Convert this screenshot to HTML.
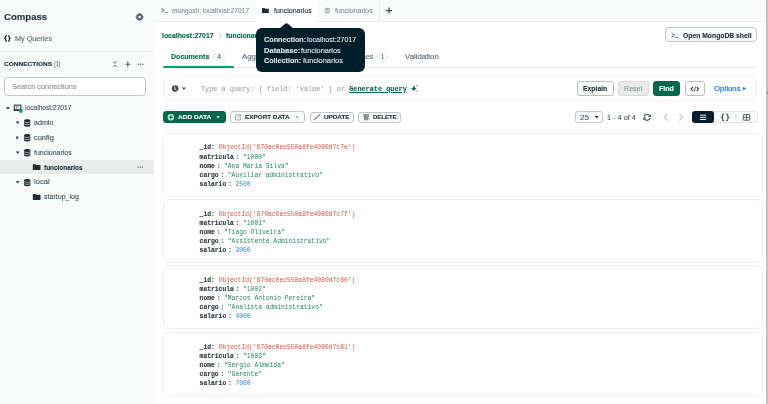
<!DOCTYPE html>
<html><head><meta charset="utf-8">
<style>
*{margin:0;padding:0;box-sizing:border-box}
html,body{width:768px;height:404px;overflow:hidden;background:#fff;font-family:"Liberation Sans",sans-serif;color:#1c2d38}
.a{position:absolute;white-space:nowrap;line-height:1}
svg{position:absolute;overflow:visible}
.tx{position:absolute;white-space:nowrap;line-height:1;transform-origin:0 0;-webkit-text-stroke:0.12px currentColor}
.card{position:absolute;left:162.6px;width:600.3px;height:64px;border:1px solid #edf0ef;border-radius:6px;background:#fff}
.doc{position:absolute;left:36.2px;top:9px;font-family:"Liberation Mono",monospace;font-size:6.18px;line-height:9px;color:#5c6c75;white-space:pre}
.doc b{color:#3d4f58}
.oid{color:#e0533c}
.str{color:#1f8a5a}
.num{color:#2f7ef6}
.btn{position:absolute;border:1px solid #c1c7c6;border-radius:3px;background:#f9fbfa}
.dl b{-webkit-text-stroke:0.15px currentColor}.dl{position:absolute;left:199.6px;font-family:"Liberation Mono",monospace;font-size:6.333px;line-height:9.05px;white-space:pre}
</style></head><body><div id="wrap" style="position:absolute;left:0;top:0;width:768px;height:404px;will-change:transform">
<!-- sidebar -->
<div class="a" style="left:0;top:0;width:154.2px;height:404px;background:#f9fbfa"></div>
<div class="a" style="left:0;top:51px;width:154.2px;height:1px;background:#eceff0"></div>
<div class="a" style="left:4px;top:77.2px;width:141.8px;height:18.6px;border:1px solid #c1c7c6;border-radius:3.5px;background:#fff"></div>
<div class="a" style="left:0;top:160.2px;width:154.2px;height:14.2px;background:#e8edeb"></div>
<!-- tab bar -->
<div class="a" style="left:154.2px;top:0;width:614px;height:21.5px;background:#f9fbfa;border-bottom:1px solid #eef0f0"></div>
<div class="a" style="left:255.5px;top:0;width:61.5px;height:21.6px;background:#fff"></div>

<div class="a" style="left:379.2px;top:0;width:0.8px;height:20.6px;background:#eceff0"></div>
<!-- main lines -->
<div class="a" style="left:163px;top:66.8px;width:594.3px;height:1px;background:#e8edeb"></div>
<div class="a" style="left:163px;top:65.8px;width:70.5px;height:2.2px;border-radius:1.1px;background:#00a35c"></div>
<!-- badges -->
<div class="a" style="left:213.4px;top:52.1px;width:11.4px;height:9.4px;border:1px solid #e8edeb;border-radius:5px;background:#f9fbfa"></div>
<div class="a" style="left:377.2px;top:51.9px;width:10.5px;height:9.9px;border:1px solid #e8edeb;border-radius:5px;background:#f9fbfa"></div>
<!-- open shell -->
<div class="btn" style="left:664.5px;top:27.4px;width:92.5px;height:15px;border-radius:4px"></div>
<!-- query bar -->
<div class="a" style="left:162.6px;top:75.8px;width:594.8px;height:25.1px;border:1px solid #ebefee;border-radius:5px;background:#fff"></div>
<div class="btn" style="left:577.1px;top:81.2px;width:36.6px;height:14.6px;background:#fff;border-color:#b8c0bf"></div>
<div class="btn" style="left:617.8px;top:81.2px;width:31.3px;height:14.6px;background:#e8edeb;border-color:#d6dbda"></div>
<div class="btn" style="left:653.3px;top:81.3px;width:26.7px;height:14.6px;background:#00684a;border-color:#00684a"></div>
<div class="btn" style="left:684.5px;top:81.3px;width:20.5px;height:14.6px;background:#fff;border-color:#b8c0bf"></div>
<!-- toolbar -->
<div class="btn" style="left:162.9px;top:111.3px;width:63.1px;height:11.7px;background:#00684a;border-color:#00684a"></div>
<div class="btn" style="left:230.3px;top:111.3px;width:74.8px;height:11.7px"></div>
<div class="btn" style="left:309.6px;top:111.5px;width:44.2px;height:11.5px"></div>
<div class="btn" style="left:358.4px;top:111.5px;width:42.7px;height:11.5px"></div>
<div class="btn" style="left:575.4px;top:111.1px;width:27.9px;height:12.2px;background:#fff"></div>
<div class="a" style="left:692.3px;top:111.3px;width:65.3px;height:12px;border:1px solid #e3e8e6;border-radius:3.5px;background:#f9fbfa"></div>
<div class="a" style="left:692.3px;top:111.3px;width:21.7px;height:11.6px;border-radius:3px;background:#001e2b"></div>
<!-- cards -->
<div class="card" style="top:132.8px"></div>
<div class="card" style="top:198.9px"></div>
<div class="card" style="top:265.1px"></div>
<div class="card" style="top:332.1px"></div>
<div class="dl" style="top:143.47px"><b style="color:#2f3f48">_id</b><b style="color:#5c6c75">:</b> <span style="color:#e0533c">ObjectId('670ac0ec550a8fe4080d7c7e')</span></div>
<div class="dl" style="top:152.52px"><b style="color:#2f3f48">matricula</b><b style="color:#5c6c75;display:inline-block;margin:0 3.5px 0 1.9px">:</b><span style="color:#1f8a5a">"1000"</span></div>
<div class="dl" style="top:161.57px"><b style="color:#2f3f48">nome</b><b style="color:#5c6c75;display:inline-block;margin:0 3.5px 0 1.9px">:</b><span style="color:#1f8a5a">"Ana Maria Silva"</span></div>
<div class="dl" style="top:170.62px"><b style="color:#2f3f48">cargo</b><b style="color:#5c6c75;display:inline-block;margin:0 3.5px 0 1.9px">:</b><span style="color:#1f8a5a">"Auxiliar administrativo"</span></div>
<div class="dl" style="top:179.67px"><b style="color:#2f3f48">salario</b><b style="color:#5c6c75;display:inline-block;margin:0 3.5px 0 1.9px">:</b><span style="color:#2f7ef6">2500</span></div>
<div class="dl" style="top:209.57px"><b style="color:#2f3f48">_id</b><b style="color:#5c6c75">:</b> <span style="color:#e0533c">ObjectId('670ac0ec550a8fe4080d7c7f')</span></div>
<div class="dl" style="top:218.62px"><b style="color:#2f3f48">matricula</b><b style="color:#5c6c75;display:inline-block;margin:0 3.5px 0 1.9px">:</b><span style="color:#1f8a5a">"1001"</span></div>
<div class="dl" style="top:227.67px"><b style="color:#2f3f48">nome</b><b style="color:#5c6c75;display:inline-block;margin:0 3.5px 0 1.9px">:</b><span style="color:#1f8a5a">"Tiago Oliveira"</span></div>
<div class="dl" style="top:236.72px"><b style="color:#2f3f48">cargo</b><b style="color:#5c6c75;display:inline-block;margin:0 3.5px 0 1.9px">:</b><span style="color:#1f8a5a">"Assistente Administrativo"</span></div>
<div class="dl" style="top:245.77px"><b style="color:#2f3f48">salario</b><b style="color:#5c6c75;display:inline-block;margin:0 3.5px 0 1.9px">:</b><span style="color:#2f7ef6">3000</span></div>
<div class="dl" style="top:275.77px"><b style="color:#2f3f48">_id</b><b style="color:#5c6c75">:</b> <span style="color:#e0533c">ObjectId('670ac0ec550a8fe4080d7c80')</span></div>
<div class="dl" style="top:284.82px"><b style="color:#2f3f48">matricula</b><b style="color:#5c6c75;display:inline-block;margin:0 3.5px 0 1.9px">:</b><span style="color:#1f8a5a">"1002"</span></div>
<div class="dl" style="top:293.87px"><b style="color:#2f3f48">nome</b><b style="color:#5c6c75;display:inline-block;margin:0 3.5px 0 1.9px">:</b><span style="color:#1f8a5a">"Marcos Antonio Pereira"</span></div>
<div class="dl" style="top:302.92px"><b style="color:#2f3f48">cargo</b><b style="color:#5c6c75;display:inline-block;margin:0 3.5px 0 1.9px">:</b><span style="color:#1f8a5a">"Analista administrativo"</span></div>
<div class="dl" style="top:311.97px"><b style="color:#2f3f48">salario</b><b style="color:#5c6c75;display:inline-block;margin:0 3.5px 0 1.9px">:</b><span style="color:#2f7ef6">4000</span></div>
<div class="dl" style="top:342.77px"><b style="color:#2f3f48">_id</b><b style="color:#5c6c75">:</b> <span style="color:#e0533c">ObjectId('670ac0ec550a8fe4080d7c81')</span></div>
<div class="dl" style="top:351.82px"><b style="color:#2f3f48">matricula</b><b style="color:#5c6c75;display:inline-block;margin:0 3.5px 0 1.9px">:</b><span style="color:#1f8a5a">"1003"</span></div>
<div class="dl" style="top:360.87px"><b style="color:#2f3f48">nome</b><b style="color:#5c6c75;display:inline-block;margin:0 3.5px 0 1.9px">:</b><span style="color:#1f8a5a">"Sergio Almeida"</span></div>
<div class="dl" style="top:369.92px"><b style="color:#2f3f48">cargo</b><b style="color:#5c6c75;display:inline-block;margin:0 3.5px 0 1.9px">:</b><span style="color:#1f8a5a">"Gerente"</span></div>
<div class="dl" style="top:378.97px"><b style="color:#2f3f48">salario</b><b style="color:#5c6c75;display:inline-block;margin:0 3.5px 0 1.9px">:</b><span style="color:#2f7ef6">7000</span></div>
<!-- query placeholder -->
<div class="a" style="left:201.2px;top:85.6px;font-family:'Liberation Mono',monospace;font-size:7.5px;transform:scaleX(0.9144);transform-origin:0 0;-webkit-text-stroke:0.1px currentColor;color:#9aa3a6;white-space:pre">Type a query: { field: 'value' } or <b style="color:#00684a;text-decoration:underline">Generate query</b></div>
<!-- ICONS -->
<svg style="left:0;top:0" width="768" height="404" viewBox="0 0 768 404">
<!-- gear -->
<circle cx="139.6" cy="16.9" r="2.35" fill="none" stroke="#5c6c75" stroke-width="2.3"/>
<g fill="#5c6c75">
<rect x="139" y="12.9" width="1.2" height="1" /><rect x="139" y="19.9" width="1.2" height="1"/>
<rect x="135.6" y="16.3" width="1" height="1.2"/><rect x="142.6" y="16.3" width="1" height="1.2"/>
</g>
<!-- {} sidebar -->
<g fill="none" stroke="#1c2d38" stroke-width="1.2" stroke-linejoin="round">
<path d="M6.9 35.6H6.5Q5.6 35.6 5.6 36.6V37.6Q5.6 38.45 4.5 38.45Q5.6 38.45 5.6 39.3V40.3Q5.6 41.2 6.5 41.2H6.9"/>
<path d="M7.9 35.6H8.3Q9.2 35.6 9.2 36.6V37.6Q9.2 38.45 10.3 38.45Q9.2 38.45 9.2 39.3V40.3Q9.2 41.2 8.3 41.2H7.9"/>
</g>
<!-- collapse -->
<g fill="none" stroke="#5c6c75" stroke-width="1">
<path d="M113.3 61.6L115.1 63.1L116.9 61.6M113.3 66.7L115.1 65.2L116.9 66.7"/>
</g>
<!-- plus -->
<path d="M127.8 61.6V66.9M125.2 64.25H130.4" stroke="#5c6c75" stroke-width="1.2"/>
<!-- dots -->
<g fill="#5c6c75"><rect x="137.8" y="63.6" width="1.3" height="1.3"/><rect x="139.9" y="63.6" width="1.3" height="1.3"/><rect x="142" y="63.6" width="1.3" height="1.3"/></g>
<!-- tree carets -->
<g fill="#1c2d38">
<path d="M5.9 107.2H10L7.95 109.6Z"/>
<path d="M15.8 121.6H19.5L17.65 124Z"/>
<path d="M16.4 135.7V139.5L18.7 137.6Z"/>
<path d="M15.8 151.4H19.5L17.65 153.8Z"/>
<path d="M15.8 181.2H19.5L17.65 183.6Z"/>
</g>
<!-- monitor -->
<g>
<rect x="14.3" y="105.1" width="6.6" height="4.8" fill="none" stroke="#1c2d38" stroke-width="1"/>
<rect x="13.7" y="109.5" width="7.8" height="1.3" fill="#1c2d38"/>
<path d="M15.8 106.8H18.2M15.8 108H17.2" stroke="#1c2d38" stroke-width="0.6"/>
<circle cx="20.9" cy="111.1" r="1.9" fill="#00a35c"/>
</g>
<!-- db icons -->

<g fill="#1c2d38">
<ellipse cx="27.20" cy="120.50" rx="3.1" ry="1.2"/><rect x="24.10" y="120.50" width="6.2" height="5"/><ellipse cx="27.20" cy="125.50" rx="3.1" ry="1.2"/><ellipse cx="27.20" cy="135.30" rx="3.1" ry="1.2"/><rect x="24.10" y="135.30" width="6.2" height="5"/><ellipse cx="27.20" cy="140.30" rx="3.1" ry="1.2"/><ellipse cx="27.20" cy="150.30" rx="3.1" ry="1.2"/><rect x="24.10" y="150.30" width="6.2" height="5"/><ellipse cx="27.20" cy="155.30" rx="3.1" ry="1.2"/><ellipse cx="27.20" cy="180.10" rx="3.1" ry="1.2"/><rect x="24.10" y="180.10" width="6.2" height="5"/><ellipse cx="27.20" cy="185.10" rx="3.1" ry="1.2"/>
</g>
<g fill="none" stroke="#f9fbfa" stroke-width="0.6">
<path d="M24.5 122.2Q27.2 123.2 29.9 122.2M24.5 124.3Q27.2 125.3 29.9 124.3"/>
<path d="M24.5 137Q27.2 138 29.9 137M24.5 139.1Q27.2 140.1 29.9 139.1"/>
<path d="M24.5 152Q27.2 153 29.9 152M24.5 154.1Q27.2 155.1 29.9 154.1"/>
<path d="M24.5 181.8Q27.2 182.8 29.9 181.8M24.5 183.9Q27.2 184.9 29.9 183.9"/>
</g>
<!-- folders -->
<g fill="#1c2d38">
<path d="M32.8 164.6Q32.8 164.2 33.2 164.2H35.6L36.4 165H40.1Q40.5 165 40.5 165.4V169.7Q40.5 170.1 40.1 170.1H33.2Q32.8 170.1 32.8 169.7Z"/>
<path d="M32.8 194.4Q32.8 194 33.2 194H35.6L36.4 194.8H40.1Q40.5 194.8 40.5 195.2V199.5Q40.5 199.9 40.1 199.9H33.2Q32.8 199.9 32.8 199.5Z"/>
</g>
<g fill="#5c6c75"><rect x="137.6" y="166.5" width="1.2" height="1.2"/><rect x="139.7" y="166.5" width="1.2" height="1.2"/><rect x="141.8" y="166.5" width="1.2" height="1.2"/></g>
<!-- tab >_ -->
<path d="M161.3 8.2L164 10.2L161.3 12.2" fill="none" stroke="#889397" stroke-width="1.1"/>
<path d="M164.3 12.6H168.1" stroke="#889397" stroke-width="1"/>
<!-- tab folder -->
<path d="M262 8.4Q262 8 262.4 8H264.6L265.3 8.7H268.4Q268.8 8.7 268.8 9.1V12.6Q268.8 13 268.4 13H262.4Q262 13 262 12.6Z" fill="#1c2d38"/>
<!-- tab db -->
<g fill="#aab3b5"><ellipse cx="327.25" cy="8.6" rx="2.45" ry="0.9"/><rect x="324.8" y="8.6" width="4.9" height="4.1"/><ellipse cx="327.25" cy="12.7" rx="2.45" ry="0.9"/></g>
<path d="M325.2 10.3Q327.25 11.1 329.3 10.3M325.2 11.9Q327.25 12.7 329.3 11.9" fill="none" stroke="#f9fbfa" stroke-width="0.5"/>
<!-- tab plus -->
<path d="M389 7.6V13.6M386 10.6H392" stroke="#3d4f58" stroke-width="1.3"/>
<!-- breadcrumb chevron -->
<path d="M218.6 32.9L221.2 35.3L218.6 37.7" fill="none" stroke="#b8c0bf" stroke-width="0.9"/>
<!-- open shell >_ -->
<path d="M671.5 33L674.3 35.1L671.5 37.2" fill="none" stroke="#5c6c75" stroke-width="1"/>
<path d="M674.6 37.3H678.7" stroke="#5c6c75" stroke-width="0.9"/>
<!-- clock -->
<circle cx="175.1" cy="88.6" r="3.3" fill="#3d4f58"/>
<path d="M174.7 86.6V88.9L176.3 90.3" fill="none" stroke="#fff" stroke-width="0.9"/>
<path d="M181.9 87.5H185.9L183.9 89.9Z" fill="#3d4f58"/>
<!-- sparkle -->
<path d="M413.9 85.6Q414.4 88.1 416.9 88.6Q414.4 89.1 413.9 91.6Q413.4 89.1 410.9 88.6Q413.4 88.1 413.9 85.6Z" fill="#00684a"/>
<rect x="416.4" y="85" width="1.3" height="1.3" fill="#5ea88a"/>
<rect x="416.4" y="90.6" width="1.3" height="1.3" fill="#5ea88a"/>
<!-- </> -->
<path d="M692.7 87.2L691.2 89.1L692.7 91M696.9 87.2L698.4 89.1L696.9 91" fill="none" stroke="#1c2d38" stroke-width="1.1"/>
<path d="M695.4 86.6L694.2 91.6" stroke="#1c2d38" stroke-width="0.8"/>
<!-- options triangle -->
<path d="M743.1 86.8V90.4L745.9 88.6Z" fill="#016bf8"/>
<!-- add data icon -->
<circle cx="170.9" cy="117.25" r="3.2" fill="#c0f0d6"/>
<path d="M170.9 115.2V119.3M168.85 117.25H172.95" stroke="#00684a" stroke-width="1.2"/>
<path d="M216.4 116.3H219.8L218.1 118.4Z" fill="#e0f5ea"/>
<!-- export icon -->
<path d="M238.5 115H236Q235.5 115 235.5 115.5V119.5Q235.5 120 236 120H240Q240.5 120 240.5 119.5V117.5" fill="none" stroke="#889397" stroke-width="0.8"/>
<path d="M237.5 118L240.8 114.7M238.8 114.7H240.8V116.7" fill="none" stroke="#889397" stroke-width="0.8"/>
<path d="M295.6 116.5H298.8L297.2 118.5Z" fill="#889397"/>
<!-- pencil -->
<path d="M314.4 119.6L319.8 114.8" stroke="#889397" stroke-width="1.3" stroke-linecap="round"/>
<!-- trash -->
<path d="M363.3 114.6H369L368.3 120.3H364Z" fill="#889397"/>
<rect x="363" y="114.3" width="6.3" height="1.1" rx="0.4" fill="#889397"/>
<!-- select caret -->
<path d="M594.7 116.1H598.6L596.65 118.6Z" fill="#1c2d38"/>
<!-- refresh -->
<g fill="none" stroke="#3d4f58" stroke-width="1.1">
<path d="M644.2 116.6A3 3 0 0 1 649.6 115.6"/>
<path d="M650 118A3 3 0 0 1 644.6 119"/>
</g>
<path d="M650.8 114.2V117.1H648Z" fill="#3d4f58"/>
<path d="M643.4 120.4V117.5H646.2Z" fill="#3d4f58"/>
<!-- prev/next -->
<path d="M667.6 114.2L664.2 117.4L667.6 120.6" fill="none" stroke="#c1c7c6" stroke-width="1.1"/>
<path d="M679.4 114.2L682.8 117.4L679.4 120.6" fill="none" stroke="#c1c7c6" stroke-width="1.1"/>
<!-- list icon -->
<path d="M700.1 115.2H706.1M700.1 117.35H706.1M700.1 119.5H706.1" stroke="#fff" stroke-width="0.95"/>
<!-- {} view -->
<g fill="none" stroke="#3d4f58" stroke-width="1.1" stroke-linejoin="round">
<path d="M724.1 114H723.6Q722.6 114 722.6 115V116.4Q722.6 117.3 721.5 117.3Q722.6 117.3 722.6 118.2V119.6Q722.6 120.6 723.6 120.6H724.1"/>
<path d="M726.3 114H726.8Q727.8 114 727.8 115V116.4Q727.8 117.3 728.9 117.3Q727.8 117.3 727.8 118.2V119.6Q727.8 120.6 726.8 120.6H726.3"/>
</g>
<rect x="735.3" y="114.3" width="1.1" height="6" fill="#e3e8e6"/>
<!-- grid -->
<rect x="743.3" y="114.6" width="6.5" height="5.6" rx="0.6" fill="none" stroke="#3d4f58" stroke-width="0.9"/>
<path d="M743.3 117.4H749.8M746.55 114.6V120.2" stroke="#3d4f58" stroke-width="0.8"/>
</svg>

<!-- TEXTS -->
<div class="tx" style="left:3.575px;top:13.004px;font-size:9.316px;font-weight:bold;color:#1c2d38;font-family:'Liberation Sans';transform:scaleX(1.0299)">Compass</div>
<div class="tx" style="left:15.159px;top:35.700px;font-size:6.945px;font-weight:normal;color:#5c6c75;font-family:'Liberation Sans';transform:scaleX(1.0434)">My Queries</div>
<div class="tx" style="left:3.681px;top:62.413px;font-size:5.750px;font-weight:bold;color:#1c2d38;font-family:'Liberation Sans';transform:scaleX(1.1336)">CONNECTIONS</div>
<div class="tx" style="left:11.695px;top:83.114px;font-size:7.694px;font-weight:normal;color:#889397;font-family:'Liberation Sans';transform:scaleX(0.9561)">Search connections</div>
<div class="tx" style="left:24.510px;top:105.014px;font-size:6.877px;font-weight:normal;color:#45555e;font-family:'Liberation Sans';transform:scaleX(0.9660)">localhost:27017</div>
<div class="tx" style="left:34.202px;top:119.802px;font-size:6.877px;font-weight:normal;color:#45555e;font-family:'Liberation Sans';transform:scaleX(1.0398)">admin</div>
<div class="tx" style="left:34.192px;top:134.605px;font-size:6.877px;font-weight:normal;color:#45555e;font-family:'Liberation Sans';transform:scaleX(1.0846)">config</div>
<div class="tx" style="left:34.425px;top:149.711px;font-size:6.877px;font-weight:normal;color:#45555e;font-family:'Liberation Sans';transform:scaleX(1.0186)">funcionarios</div>
<div class="tx" style="left:43.924px;top:164.514px;font-size:6.877px;font-weight:bold;color:#1c2d38;font-family:'Liberation Sans';transform:scaleX(0.9382)">funcionarios</div>
<div class="tx" style="left:34.047px;top:179.408px;font-size:6.877px;font-weight:normal;color:#45555e;font-family:'Liberation Sans';transform:scaleX(1.1124)">local</div>
<div class="tx" style="left:43.915px;top:194.302px;font-size:6.877px;font-weight:normal;color:#45555e;font-family:'Liberation Sans';transform:scaleX(1.0274)">startup_log</div>
<div class="tx" style="left:172.112px;top:7.702px;font-size:6.740px;font-weight:normal;color:#889397;font-family:'Liberation Sans';transform:scaleX(0.9801)">mongosh: localhost:27017</div>
<div class="tx" style="left:273.525px;top:7.908px;font-size:6.877px;font-weight:normal;color:#1c2d38;font-family:'Liberation Sans';transform:scaleX(1.0186)">funcionarios</div>
<div class="tx" style="left:335.125px;top:7.908px;font-size:6.877px;font-weight:normal;color:#889397;font-family:'Liberation Sans';transform:scaleX(1.0186)">funcionarios</div>
<div class="tx" style="left:162.396px;top:31.810px;font-size:7.694px;font-weight:bold;color:#00684a;font-family:'Liberation Sans';transform:scaleX(0.8931)">localhost:27017</div>
<div class="tx" style="left:171.185px;top:53.001px;font-size:7.609px;font-weight:bold;color:#00684a;font-family:'Liberation Sans';transform:scaleX(0.9262)">Documents</div>
<div class="tx" style="left:404.725px;top:53.114px;font-size:7.694px;font-weight:normal;color:#5c6c75;font-family:'Liberation Sans';transform:scaleX(1.0171)">Validation</div>
<div class="tx" style="left:682.712px;top:32.608px;font-size:7.149px;font-weight:bold;color:#1c2d38;font-family:'Liberation Sans';transform:scaleX(0.9513)">Open MongoDB shell</div>
<div class="tx" style="left:583.298px;top:85.101px;font-size:7.285px;font-weight:bold;color:#1c2d38;font-family:'Liberation Sans';transform:scaleX(0.9381)">Explain</div>
<div class="tx" style="left:624.169px;top:85.107px;font-size:7.609px;font-weight:normal;color:#889397;font-family:'Liberation Sans';transform:scaleX(0.9348)">Reset</div>
<div class="tx" style="left:659.282px;top:85.301px;font-size:7.557px;font-weight:bold;color:#ffffff;font-family:'Liberation Sans';transform:scaleX(0.9371)">Find</div>
<div class="tx" style="left:713.564px;top:85.314px;font-size:7.285px;font-weight:normal;color:#016bf8;font-family:'Liberation Sans';transform:scaleX(1.0576)">Options</div>
<div class="tx" style="left:178.022px;top:114.401px;font-size:6.187px;font-weight:bold;color:#ffffff;font-family:'Liberation Sans';transform:scaleX(1.0635)">ADD DATA</div>
<div class="tx" style="left:245.427px;top:114.401px;font-size:6.187px;font-weight:bold;color:#1c2d38;font-family:'Liberation Sans';transform:scaleX(1.0287)">EXPORT DATA</div>
<div class="tx" style="left:323.928px;top:114.401px;font-size:6.187px;font-weight:bold;color:#1c2d38;font-family:'Liberation Sans';transform:scaleX(1.0256)">UPDATE</div>
<div class="tx" style="left:372.548px;top:114.401px;font-size:6.187px;font-weight:bold;color:#1c2d38;font-family:'Liberation Sans';transform:scaleX(0.9746)">DELETE</div>
<div class="tx" style="left:580.139px;top:114.112px;font-size:7.751px;font-weight:normal;color:#45555e;font-family:'Liberation Sans';transform:scaleX(1.0637)">25</div>
<div class="tx" style="left:606.668px;top:114.111px;font-size:7.421px;font-weight:normal;color:#45555e;font-family:'Liberation Sans';transform:scaleX(0.9863)">1 - 4 of 4</div>
<div class="tx" style="left:53.781px;top:60.405px;font-size:7.230px;font-weight:normal;color:#5c6c75;font-family:'Liberation Sans';transform:scaleX(0.7202)">(1)</div>
<div class="tx" style="left:225.618px;top:31.810px;font-size:7.694px;font-weight:bold;color:#00684a;font-family:'Liberation Sans';transform:scaleX(0.8931)">funcionarios</div>
<div class="tx" style="left:242.225px;top:53.114px;font-size:7.694px;font-weight:normal;color:#5c6c75;font-family:'Liberation Sans';transform:scaleX(1.0171)">Aggregations</div>
<div class="tx" style="left:311.180px;top:53.114px;font-size:7.694px;font-weight:normal;color:#5c6c75;font-family:'Liberation Sans';transform:scaleX(1.0171)">Schema</div>
<div class="tx" style="left:346.211px;top:53.114px;font-size:7.694px;font-weight:normal;color:#5c6c75;font-family:'Liberation Sans';transform:scaleX(1.0171)">Indexes</div>
<div class="tx" style="left:217.108px;top:54.011px;font-size:6.329px;font-weight:normal;color:#5c6c75;font-family:'Liberation Sans';transform:scaleX(1.1798)">4</div>
<div class="tx" style="left:380.859px;top:54.110px;font-size:6.613px;font-weight:normal;color:#5c6c75;font-family:'Liberation Sans';transform:scaleX(0.8843)">1</div>
<!-- scrollbar -->
<div class="a" style="left:765.8px;top:0;width:2.2px;height:404px;background:#c2c2c2"></div><div class="a" style="left:766.8px;top:91.3px;width:1.2px;height:2.4px;background:#8a8a8a"></div>
<!-- tooltip -->
<div class="a" style="left:255.5px;top:27.5px;width:109.3px;height:44.1px;border-radius:6px;background:#001e2b"></div>
<svg style="left:280px;top:23px" width="13" height="6" viewBox="0 0 13 6"><path d="M0 5L5.2 0.8Q6.5 -0.2 7.8 0.8L13 5V6H0Z" fill="#001e2b"/></svg>
<div class="tx" style="left:263.798px;top:36.208px;font-size:7.285px;font-weight:bold;color:#dde2e1;font-family:'Liberation Sans';transform:scaleX(0.9950)">Connection:</div>
<div class="tx" style="left:306.884px;top:36.208px;font-size:7.285px;font-weight:normal;color:#dde2e1;font-family:'Liberation Sans';transform:scaleX(0.9675)">localhost:27017</div>
<div class="tx" style="left:263.551px;top:46.614px;font-size:7.013px;font-weight:bold;color:#dde2e1;font-family:'Liberation Sans';transform:scaleX(1.0816)">Database:</div>
<div class="tx" style="left:300.825px;top:46.614px;font-size:7.013px;font-weight:normal;color:#dde2e1;font-family:'Liberation Sans';transform:scaleX(1.0547)">funcionarios</div>
<div class="tx" style="left:263.800px;top:57.911px;font-size:7.149px;font-weight:bold;color:#dde2e1;font-family:'Liberation Sans';transform:scaleX(1.0092)">Collection:</div>
<div class="tx" style="left:302.625px;top:57.911px;font-size:7.149px;font-weight:normal;color:#dde2e1;font-family:'Liberation Sans';transform:scaleX(1.0372)">funcionarios</div>
</div></body></html>
